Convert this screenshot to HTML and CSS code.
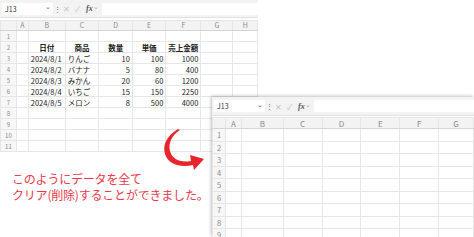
FILE: index.html
```html
<!DOCTYPE html>
<html lang="ja">
<head>
  <meta charset="UTF-8">
  <title>clear</title>
  <link rel="stylesheet" href="styles.css">
</head>
<body>
  <div class="page">
    <div class="sheet sheet-before">
      <div class="fbar">
        <div class="namebox">J13<span class="chev">&#8964;</span></div>
        <span class="dots">&#8942;</span>
        <span class="ico">&#10005;</span>
        <span class="ico">&#10003;</span>
        <span class="fx">fx</span><span class="chev small">&#8964;</span>
        <div class="finput"></div>
      </div>
      <table class="grid">
        <colgroup>
          <col style="width:16px"><col style="width:12px"><col style="width:37px"><col style="width:34px"><col style="width:34px"><col style="width:34px"><col style="width:33px"><col style="width:33px"><col style="width:25px">
        </colgroup>
        <tr class="hdr"><th class="corner"></th><th>A</th><th>B</th><th>C</th><th>D</th><th>E</th><th>F</th><th>G</th><th>H</th></tr>
        <tr><th>1</th><td></td><td></td><td></td><td></td><td></td><td></td><td></td><td></td></tr>
        <tr class="head"><th>2</th><td></td><td class="c">日付</td><td class="c">商品</td><td class="c">数量</td><td class="c">単価</td><td class="c">売上金額</td><td></td><td></td></tr>
        <tr><th>3</th><td></td><td>2024/8/1</td><td>りんご</td><td class="r">10</td><td class="r">100</td><td class="r">1000</td><td></td><td></td></tr>
        <tr><th>4</th><td></td><td>2024/8/2</td><td>バナナ</td><td class="r">5</td><td class="r">80</td><td class="r">400</td><td></td><td></td></tr>
        <tr><th>5</th><td></td><td>2024/8/3</td><td>みかん</td><td class="r">20</td><td class="r">60</td><td class="r">1200</td><td></td><td></td></tr>
        <tr><th>6</th><td></td><td>2024/8/4</td><td>いちご</td><td class="r">15</td><td class="r">150</td><td class="r">2250</td><td></td><td></td></tr>
        <tr><th>7</th><td></td><td>2024/8/5</td><td>メロン</td><td class="r">8</td><td class="r">500</td><td class="r">4000</td><td></td><td></td></tr>
        <tr><th>8</th><td></td><td></td><td></td><td></td><td></td><td></td><td></td><td></td></tr>
        <tr><th>9</th><td></td><td></td><td></td><td></td><td></td><td></td><td></td><td></td></tr>
        <tr><th>10</th><td></td><td></td><td></td><td></td><td></td><td></td><td></td><td></td></tr>
        <tr><th>11</th><td></td><td></td><td></td><td></td><td></td><td></td><td></td><td></td></tr>
      </table>
    </div>

    <p class="note">このようにデータを全て<br>クリア(削除)することができました。</p>

    <svg class="arrow" width="50" height="44" viewBox="0 0 50 44">
      <path d="M22 1 C14 6 10 14 12 22 C14 30 22 34 33 32 L32 26 L46 30 L36 41 L35 36 C22 39 10 35 7 25 C4 15 10 6 20 0 Z" fill="#e8242c"/>
    </svg>

    <div class="sheet sheet-after">
      <div class="fbar">
        <div class="namebox">J13<span class="chev">&#8964;</span></div>
        <span class="dots">&#8942;</span>
        <span class="ico">&#10005;</span>
        <span class="ico">&#10003;</span>
        <span class="fx">fx</span><span class="chev small">&#8964;</span>
        <div class="finput"></div>
      </div>
      <table class="grid">
        <colgroup>
          <col style="width:13px"><col style="width:16px"><col style="width:42px"><col style="width:39px"><col style="width:39px"><col style="width:39px"><col style="width:39px"><col style="width:35px">
        </colgroup>
        <tr class="hdr"><th class="corner"></th><th>A</th><th>B</th><th>C</th><th>D</th><th>E</th><th>F</th><th>G</th></tr>
        <tr><th>1</th><td></td><td></td><td></td><td></td><td></td><td></td><td></td></tr>
        <tr><th>2</th><td></td><td></td><td></td><td></td><td></td><td></td><td></td></tr>
        <tr><th>3</th><td></td><td></td><td></td><td></td><td></td><td></td><td></td></tr>
        <tr><th>4</th><td></td><td></td><td></td><td></td><td></td><td></td><td></td></tr>
        <tr><th>5</th><td></td><td></td><td></td><td></td><td></td><td></td><td></td></tr>
        <tr><th>6</th><td></td><td></td><td></td><td></td><td></td><td></td><td></td></tr>
        <tr><th>7</th><td></td><td></td><td></td><td></td><td></td><td></td><td></td></tr>
        <tr><th>8</th><td></td><td></td><td></td><td></td><td></td><td></td><td></td></tr>
        <tr><th>9</th><td></td><td></td><td></td><td></td><td></td><td></td><td></td></tr>
      </table>
    </div>
  </div>
</body>
</html>
```

FILE: styles.css
```css
body {
  margin: 0;
  background: #fff;
  font-family: "Noto Sans CJK JP", "Noto Sans", sans-serif;
}

.page {
  position: relative;
  width: 474px;
  height: 237px;
  overflow: hidden;
}

/* スプレッドシート共通 */
.sheet {
  background: #fff;
  color: #222;
}

.sheet-before {
  width: 258px;
}

.fbar {
  display: flex;
  align-items: center;
  height: 15px;
  padding: 1px 0 1px 2px;
  background: #f3f3f3;
  border-bottom: 1px solid #e2e2e2;
  font-size: 7px;
  color: #999;
}

.namebox {
  display: flex;
  align-items: center;
  justify-content: space-between;
  width: 46px;
  height: 12px;
  padding: 0 2px 0 3px;
  background: #fff;
  color: #333;
  font-size: 7px;
}

.chev {
  font-size: 7px;
  color: #666;
  line-height: 1;
  margin-top: -4px;
}

.chev.small {
  color: #aaa;
  margin-right: 3px;
}

.dots {
  width: 8px;
  text-align: center;
  color: #666;
}

.ico {
  width: 11px;
  text-align: center;
  color: #c4c4c4;
  font-size: 8px;
}

.fx {
  font-family: "Liberation Serif", serif;
  font-style: italic;
  font-weight: bold;
  color: #555;
  font-size: 8px;
  margin-left: 3px;
}

.finput {
  flex: 1;
  height: 12px;
  background: #fff;
}

.grid {
  border-collapse: collapse;
  table-layout: fixed;
  margin-top: 2px;
}

.grid th,
.grid td {
  padding: 0 2px;
  height: 10px;
  border: 1px solid #e6e6e6;
  font-size: 7.5px;
  line-height: 9px;
  white-space: nowrap;
  overflow: hidden;
}

.grid th {
  font-weight: normal;
  color: #8a8a8a;
  font-size: 6px;
  text-align: center;
  background: #f7f7f7;
}

.grid .hdr th {
  height: 9px;
  font-size: 7px;
  background: #f3f3f3;
  border-bottom-color: #d4d4d4;
}

.grid .corner {
  background: #f3f3f3;
}

.grid td.c {
  text-align: center;
}

.grid td.r {
  text-align: right;
}

.head td {
  font-weight: bold;
}

/* 右下の空シート */
.sheet-after {
  position: absolute;
  left: 212px;
  top: 97px;
  width: 262px;
  height: 140px;
  box-shadow: -1px -1px 3px rgba(0, 0, 0, 0.25);
}

.sheet-after .fbar {
  height: 16px;
  padding-top: 1px;
}

.sheet-after .grid th,
.sheet-after .grid td {
  height: 11.5px;
  font-size: 7.5px;
}

.sheet-after .grid .hdr th {
  height: 10px;
  font-size: 8px;
}

.sheet-after .grid {
  margin-top: 1px;
}

.note {
  margin: 19px 0 0 12px;
  font-size: 12px;
  line-height: 16px;
  color: #e8384a;
  letter-spacing: -0.2px;
}

.arrow {
  position: absolute;
  left: 158px;
  top: 129px;
}
```
